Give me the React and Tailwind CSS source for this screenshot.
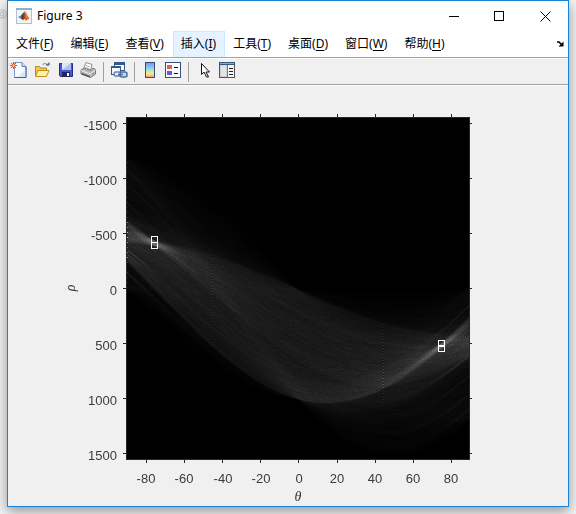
import { useEffect, useRef } from 'react';

const menus = [
  { label: '文件', accel: 'F' },
  { label: '编辑', accel: 'E' },
  { label: '查看', accel: 'V' },
  { label: '插入', accel: 'I', active: true },
  { label: '工具', accel: 'T' },
  { label: '桌面', accel: 'D' },
  { label: '窗口', accel: 'W' },
  { label: '帮助', accel: 'H' },
];

function MatlabLogo() {
  return (
    <svg className="w-4 h-4" viewBox="0 0 16 16">
      <rect x="0.5" y="0.5" width="15" height="15" fill="#f1f4f6" stroke="#b4c0c8" />
      <rect x="0" y="0" width="16" height="2" fill="#8fb0c8" />
      <path d="M2 9l3-1.5L8 4.500 6.500 9 4.500 10.500z" fill="#3c8fc0" />
      <path d="M5 7.500L8.500 3.500 7 10 5.500 9.500z" fill="#26566f" />
      <path d="M9 3c1.500 1.500 2.500 6 5 8-1.500-.5-2.500 0-4 2-.5-1.500-1-2-2.500-1.500C8.500 9 8.500 6 9 3z" fill="#d9541e" />
      <path d="M4.500 10.500L7 8l2-5-.5 6.500L7 12.500c-.5-1-1.500-2-2.500-2z" fill="#8c2a14" />
      <path d="M9.200 4c1 2 1.500 4 2 6.500" fill="none" stroke="#f3a33a" />
    </svg>
  );
}

function NewIcon() {
  return (
    <svg className="w-[18px] h-4 mr-0.5" viewBox="0 0 18 16">
      <path d="M4.500 .5h7.500l4 4v11h-11.500z" fill="#f5faff" stroke="#7f9cc6" />
      <path d="M8 15l8-8v8z" fill="#d4e6f8" />
      <path d="M12 .5v4h4" fill="#c9dcf2" stroke="#5f7fae" />
      <path d="M16 5v10.500H4.500" fill="none" stroke="#3e5f94" />
      <path d="M3.500 0v7M0 3.500h7M1 1l5 5M6 1L1 6" stroke="#d5542c" />
      <circle cx="3.500" cy="3.500" r="1.500" fill="#ffe9a0" stroke="#d5542c" />
    </svg>
  );
}

function OpenIcon() {
  return (
    <svg className="w-4 h-4 mr-0.5" viewBox="0 0 16 16">
      <path d="M1.500 14V4.500h4l1 1.500h6v8z" fill="#f2c84b" stroke="#ba8a1d" />
      <path d="M1.500 14.500L4 8.500h11l-2.500 6z" fill="#fff0a2" stroke="#c49122" />
      <path d="M8.500 3c1.500-2 4-2 5 .5" fill="none" stroke="#5b7ba8" />
      <path d="M11.500 3.500h4V0z" fill="#48699a" />
    </svg>
  );
}

function SaveIcon() {
  return (
    <svg className="w-4 h-4" viewBox="0 0 16 16">
      <path d="M1.500 1.500h13v13h-12l-1-1z" fill="#4a55cf" stroke="#252c86" />
      <rect x="4" y="1" width="9" height="7" fill="#dce8f8" />
      <path d="M4 8l9-7v7z" fill="#a9c2ed" />
      <rect x="4" y="10" width="8" height="5" fill="#20265e" />
      <rect x="9" y="11" width="2" height="3" fill="#fff" />
    </svg>
  );
}

function PrintIcon() {
  return (
    <svg className="w-4 h-4 mr-0.5" viewBox="0 0 16 16">
      <path d="M3.500 7L6 .5l6 2L10.500 9z" fill="#fff" stroke="#909090" />
      <path d="M6 3.500l4 1.500M5.500 5.500l4 1.500" stroke="#a9b2bc" />
      <path d="M1 8l3-2 7 2.500L13 6l2.500 1.500V12l-5 3.500L1 12z" fill="#b8bab8" stroke="#777" />
      <path d="M1 8.500l9 3.500 5.500-4" fill="none" stroke="#eee" />
      <path d="M2 11l8 3v1.500L2 12.500z" fill="#555" />
      <path d="M12 12l2-1" stroke="#68a357" />
    </svg>
  );
}

function LinkIcon() {
  return (
    <svg className="w-[18px] h-4" viewBox="0 0 18 16">
      <rect x="4.500" y=".5" width="10" height="8" fill="#fff" stroke="#35598c" />
      <rect x="4" y="0" width="11" height="3" fill="#35598c" />
      <rect x="1.500" y="4.500" width="9" height="8" fill="#f4f7fb" stroke="#35598c" />
      <rect x="1" y="4" width="10" height="2" fill="#35598c" />
      <rect x="4" y="10" width="7" height="4" rx="2" fill="#e8eef5" stroke="#6485b0" strokeWidth="1.500" />
      <rect x="10" y="10" width="7" height="5" rx="2" fill="#c9d8ea" stroke="#496c9d" strokeWidth="1.500" />
      <path d="M8 12.500h5" stroke="#496c9d" strokeWidth="1.500" />
    </svg>
  );
}

function ColorbarIcon() {
  return (
    <svg className="w-4 h-4" viewBox="0 0 16 16">
      <defs>
        <linearGradient id="cbar" x1="0" y1="0" x2="0" y2="1">
          <stop offset="0" stopColor="#8c83e8" />
          <stop offset=".35" stopColor="#7fd0f5" />
          <stop offset=".65" stopColor="#ddf0a0" />
          <stop offset=".8" stopColor="#fbdc85" />
          <stop offset="1" stopColor="#f08a72" />
        </linearGradient>
      </defs>
      <rect x="3.500" y=".5" width="9" height="15" fill="url(#cbar)" stroke="#35507f" />
    </svg>
  );
}

function LegendIcon() {
  return (
    <svg className="w-4 h-4" viewBox="0 0 16 16">
      <rect x=".5" y=".5" width="15" height="15" fill="#fbfbff" stroke="#35507f" />
      <rect x="2" y="3" width="5" height="4" fill="#e2605c" />
      <rect x="2" y="9" width="5" height="4" fill="#615fdc" />
      <path d="M9 5.500h4M9 11.500h4" stroke="#111" />
    </svg>
  );
}

function CursorIcon() {
  return (
    <svg className="w-4 h-4 ml-0.5" viewBox="0 0 16 16">
      <path d="M4.500 1.500v11l2.500-2.500 2.500 5h2l-2.500-5h3.500z" fill="#fff" stroke="#111" />
    </svg>
  );
}

function PanelIcon() {
  return (
    <svg className="w-4 h-4" viewBox="0 0 16 16">
      <rect x=".5" y=".5" width="15" height="15" fill="#f7f7f7" stroke="#555" />
      <rect x="0" y="0" width="16" height="3" fill="#35597f" />
      <path d="M1 1.500h14" stroke="#80add2" />
      <rect x="1" y="3" width="7" height="12" fill="#cfcfcf" />
      <rect x="2" y="4" width="5" height="10" fill="#e4e4e4" />
      <path d="M8.500 3v12" stroke="#777" />
      <path d="M10 6.500h4M10 9.500h4M10 12.500h4" stroke="#222" />
    </svg>
  );
}

const toolGroups = [
  [
    { name: '新建图窗', Icon: NewIcon },
    { name: '打开文件', Icon: OpenIcon },
    { name: '保存图窗', Icon: SaveIcon },
    { name: '打印图窗', Icon: PrintIcon },
  ],
  [{ name: '链接绘图', Icon: LinkIcon }],
  [
    { name: '插入颜色栏', Icon: ColorbarIcon },
    { name: '插入图例', Icon: LegendIcon },
  ],
  [
    { name: '编辑绘图', Icon: CursorIcon },
    { name: '打开属性检查器', Icon: PanelIcon },
  ],
];

// axes box inside the figure
const AX = { left: 118, top: 31, width: 343, height: 342 };
const xOf = (theta) => 290.9 + theta * 1.907;
const yOf = (rho) => 202.5 + rho * 0.11;

const thetaTicks = [-80, -60, -40, -20, 0, 20, 40, 60, 80];
const rhoTicks = [-1500, -1000, -500, 0, 500, 1000, 1500];

function random(seed) {
  let s = seed;
  return () => {
    s = (s * 1664525 + 1013904223) % 4294967296;
    return s / 4294967296;
  };
}

// edge points of the source image: [x, y, weight]
function buildPoints() {
  const rnd = random(11);
  const points = [];
  const add = (n, total, fn) => {
    for (let i = 0; i < n; i++) {
      const [x, y] = fn();
      points.push([x, y, total / n]);
    }
  };
  add(9000, 1300, () => [rnd() * 1000, rnd() * 1190]);
  add(6000, 950, () => [rnd() * 1000, 200 + (rnd() + rnd()) * 270]);
  // the two long lines that give the peaks
  add(1500, 420, () => {
    const x = rnd() * 650;
    return [x, 430 + 0.268 * x + (rnd() - 0.5) * 50];
  });
  add(1500, 330, () => {
    const x = 1000 - rnd() * rnd() * 800;
    return [x, 540 - 0.268 * x + (rnd() - 0.5) * 50];
  });
  // short strong edges
  [[930, 150], [880, 320], [850, 365], [760, 610], [900, 590], [900, 780], [850, 950], [920, 1080]].forEach(([x, y], i) => {
    add(160, i < 5 ? 28 : 16, () => [x + (rnd() - 0.5) * 160, y + rnd() * 14]);
  });
  return points;
}

function HoughImage() {
  const ref = useRef(null);

  useEffect(() => {
    const { width, height } = AX;
    const acc = new Float32Array(width * height);
    const points = buildPoints();
    for (let c = 0; c < width; c++) {
      const a = (((c + 0.5) / width) * 180 - 90) * (Math.PI / 180);
      const cos = Math.cos(a);
      const sin = Math.sin(a);
      for (const [x, y, w] of points) {
        const row = yOf(x * cos + y * sin) - AX.top;
        const r = Math.floor(row);
        const f = row - r;
        if (r >= 0 && r < height - 1) {
          acc[r * width + c] += w * (1 - f);
          acc[(r + 1) * width + c] += w * f;
        }
      }
    }

    const ctx = ref.current.getContext('2d');
    const img = ctx.createImageData(width, height);
    const rnd = random(5);
    const c1 = Math.round(width / 4);
    const c2 = Math.round((width * 3) / 4);
    for (let i = 0; i < acc.length; i++) {
      const c = i % width;
      const r = Math.floor(i / width);
      let v = acc[i] * (0.82 + rnd() * 0.2);
      // aliasing at the diagonals and at the first column
      if (c === c1 || c === c2) v *= r % 3 === 0 ? 1.9 : 0.7;
      if (c === 1) v *= r % 5 === 0 ? 3 : 0.8;
      img.data[i * 4] = v;
      img.data[i * 4 + 1] = v;
      img.data[i * 4 + 2] = v;
      img.data[i * 4 + 3] = 255;
    }
    ctx.putImageData(img, 0, 0);
  }, []);

  return <canvas ref={ref} width={AX.width} height={AX.height} className="block w-full h-full bg-black" />;
}

function HoughPlot() {
  const right = AX.left + AX.width;
  const bottom = AX.top + AX.height;

  return (
    <svg className="block w-full h-auto" viewBox="0 0 560 420" role="img" aria-label="Hough transform">
      <foreignObject x={AX.left} y={AX.top} width={AX.width} height={AX.height}>
        <HoughImage />
      </foreignObject>
      <rect x={AX.left + 0.5} y={AX.top + 0.5} width={AX.width} height={AX.height} fill="none" stroke="#262626" />

      <g stroke="#262626" shapeRendering="crispEdges">
        {thetaTicks.map((t) => (
          <path key={t} d={`M${Math.floor(xOf(t)) + 0.5} ${AX.top - 3}v3m0 ${AX.height + 1}v3`} />
        ))}
        {rhoTicks.map((r) => (
          <path key={r} d={`M${AX.left - 3} ${yOf(r)}h3M${right + 1} ${yOf(r)}h2`} />
        ))}
      </g>

      <g className="font-['Liberation_Sans',sans-serif] text-[13px]" fill="#3a3a3a">
        {thetaTicks.map((t) => (
          <text key={t} x={Math.round(xOf(t))} y={bottom + 24} textAnchor="middle">{t}</text>
        ))}
        {rhoTicks.map((r) => (
          <text key={r} x="109" y={Math.floor(yOf(r)) + 7} textAnchor="end">{r}</text>
        ))}
      </g>
      <g className="font-['Liberation_Serif',serif] text-[14px] italic" fill="#333">
        <text x="290" y="415" textAnchor="middle">θ</text>
        <text transform="translate(67 202) rotate(-90)" textAnchor="middle">ρ</text>
      </g>

      {/* peaks */}
      <g fill="none" stroke="#fff" shapeRendering="crispEdges">
        <path d="M143.500 150.500h6v12h-6zM143.500 156.500h6" />
        <path d="M430.500 254.500h6v11h-6zM430.500 259.500h6M430.500 260.500h6" />
      </g>
    </svg>
  );
}

export default function App() {
  return (
    <div className="relative overflow-hidden bg-[#f3f3f3] pl-[7px] pr-[7px] pb-2 text-xs text-black font-['Noto_Sans','Noto_Sans_CJK_SC',sans-serif]">
      <svg className="absolute left-0 top-2 w-[7px] h-3" viewBox="0 0 7 12" fill="none" stroke="#c4c4c4">
        <ellipse cx="2" cy="6" rx="5" ry="4" />
        <circle cx="2" cy="6" r="2" />
      </svg>
      <div className="relative border border-[#1883d7] bg-[#f0f0f0] shadow-[0_4px_12px_rgba(0,0,0,0.4)]">
        <header className="h-[30px] flex items-center bg-white pl-2">
          <MatlabLogo />
          <h1 className="flex-1 pl-[5px] text-xs font-['Noto_Sans',sans-serif]">Figure 3</h1>
          <button type="button" aria-label="最小化" className="w-[45px] h-full flex items-center justify-center">
            <svg className="w-[11px] h-[11px]" viewBox="0 0 11 11"><path d="M0 5.500h10" stroke="#000" /></svg>
          </button>
          <button type="button" aria-label="最大化" className="w-[45px] h-full flex items-center justify-center">
            <svg className="w-[11px] h-[11px]" viewBox="0 0 11 11"><rect x=".5" y=".5" width="9" height="9" fill="none" stroke="#000" /></svg>
          </button>
          <button type="button" aria-label="关闭" className="w-[46px] h-full flex items-center justify-center">
            <svg className="w-[11px] h-[11px]" viewBox="0 0 11 11"><path d="M.5 .5l10 10M10.500 .5l-10 10" stroke="#000" /></svg>
          </button>
        </header>

        <nav className="h-[27px] flex items-stretch bg-white border-b border-[#a0a0a0]">
          {menus.map((m) => (
            <button
              key={m.accel}
              type="button"
              className={`pl-[7px] pr-2 pb-px border whitespace-nowrap ${m.active ? 'bg-[#e5f3ff] border-[#cce8ff] border-b-[#e5f3ff]' : 'border-transparent'}`}
            >
              {m.label}(<span className="underline underline-offset-2">{m.accel}</span>)
            </button>
          ))}
          <button type="button" aria-label="停靠" className="ml-auto pr-1 flex items-center">
            <svg className="w-2 h-2" viewBox="0 0 8 8">
              <path d="M1 2h2l3 3" fill="none" stroke="#000" strokeWidth="1.500" />
              <path d="M7.500 1.500v5h-5z" fill="#000" />
            </svg>
          </button>
        </nav>

        <div role="toolbar" className="h-[27px] flex items-center border-t border-t-white border-b border-b-[#a0a0a0]">
          {toolGroups.map((group, i) => (
            <div key={i} className="flex items-center">
              {i > 0 && <span className="w-px h-5 mx-[3px] bg-[#a0a0a0]" />}
              {group.map(({ name, Icon }) => (
                <button key={name} type="button" title={name} aria-label={name} className="w-[23px] h-6 pb-1 flex items-center justify-center">
                  <Icon />
                </button>
              ))}
              {i > 0 && <span className="w-px" />}
            </div>
          ))}
        </div>

        <main className="border-t border-white">
          <HoughPlot />
        </main>
      </div>
    </div>
  );
}
